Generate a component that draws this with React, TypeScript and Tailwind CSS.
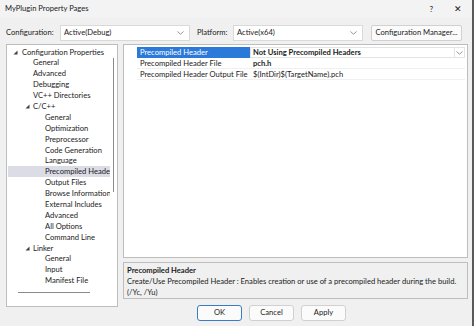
import React from "react";

const Chevron = ({ className = "" }: { className?: string }) => (
  <svg width="7" height="4" viewBox="0 0 7 4" className={className}>
    <path d="M0.5 0.5 L3.5 3.2 L6.5 0.5" fill="none" stroke="#7a7a7a" strokeWidth="0.8" />
  </svg>
);

const Tri = () => (
  <svg width="5" height="5" viewBox="0 0 5 5">
    <path d="M4.5 0.5 L4.5 4.5 L0.5 4.5 Z" fill="#404040" />
  </svg>
);

type Item = { label: string; level: number; expander?: boolean; selected?: boolean };

const items: Item[] = [
  { label: "Configuration Properties", level: 0, expander: true },
  { label: "General", level: 1 },
  { label: "Advanced", level: 1 },
  { label: "Debugging", level: 1 },
  { label: "VC++ Directories", level: 1 },
  { label: "C/C++", level: 1, expander: true },
  { label: "General", level: 2 },
  { label: "Optimization", level: 2 },
  { label: "Preprocessor", level: 2 },
  { label: "Code Generation", level: 2 },
  { label: "Language", level: 2 },
  { label: "Precompiled Heade", level: 2, selected: true },
  { label: "Output Files", level: 2 },
  { label: "Browse Information", level: 2 },
  { label: "External Includes", level: 2 },
  { label: "Advanced", level: 2 },
  { label: "All Options", level: 2 },
  { label: "Command Line", level: 2 },
  { label: "Linker", level: 1, expander: true },
  { label: "General", level: 2 },
  { label: "Input", level: 2 },
  { label: "Manifest File", level: 2 },
];

const padFor = (l: number) => (l === 0 ? "pl-[14px]" : l === 1 ? "pl-[25px]" : "pl-[37px]");
const triPad = (l: number) => (l === 0 ? "left-[5px]" : "left-[17px]");

export default function App() {
  return (
    <div
      className="w-[474px] h-[326px] bg-[#f0f0f0] text-[#1b1b1b] text-[7.6px] whitespace-nowrap overflow-hidden border-r-2 border-[#5a5a5a] flex flex-col"
      style={{ fontFamily: 'Lato, "Noto Sans", sans-serif' }}
    >
      {/* Title bar */}
      <div className="h-[18px] flex items-center justify-between pl-[5px] pr-[10px] bg-[#f3f3f3]">
        <span>MyPlugin Property Pages</span>
        <div className="flex items-center gap-[21px] text-[8px]">
          <span>?</span>
          <span className="text-[9px]">✕</span>
        </div>
      </div>

      {/* Configuration row */}
      <div className="h-[16px] mt-[7px] flex items-center pl-[6px]">
        <span className="w-[54px]">Configuration:</span>
        <div className="w-[130px] h-[16px] bg-white border border-[#d9d9d9] flex items-center justify-between pl-[3px] pr-[5px]">
          <span>Active(Debug)</span>
          <Chevron />
        </div>
        <span className="ml-[7px] w-[36px]">Platform:</span>
        <div className="w-[130px] h-[16px] bg-white border border-[#d9d9d9] flex items-center justify-between pl-[3px] pr-[5px]">
          <span>Active(x64)</span>
          <Chevron />
        </div>
        <div className="ml-[8px] w-[91px] h-[16px] bg-[#fbfbfb] border border-[#d0d0d0] rounded-[2px] flex items-center justify-center">
          Configuration Manager...
        </div>
      </div>

      {/* Main */}
      <div className="flex mt-[3px] pl-[6px] gap-[5px]">
        {/* Tree */}
        <div className="relative w-[112px] h-[263px] bg-white border border-[#bdbdbd] pl-[1px] pt-[1.5px]">
          {items.map((it, i) => (
            <div
              key={i}
              className={`relative h-[10.9px] leading-[10.9px] w-[102px] overflow-hidden ${padFor(it.level)} ${
                it.selected ? "bg-[#dcdce6]" : ""
              }`}
            >
              {it.expander && (
                <span className={`absolute top-[3px] ${triPad(it.level)} flex`}>
                  <Tri />
                </span>
              )}
              {it.label}
            </div>
          ))}
          {/* vertical scrollbar thumb */}
          <div className="absolute left-[106px] top-[13px] w-[1px] h-[134px] bg-[#8a8a8a]" />
          {/* horizontal scrollbar thumb */}
          <div className="absolute left-[11px] top-[247px] w-[72px] h-[1px] bg-[#8a8a8a]" />
        </div>

        {/* Right column */}
        <div className="w-[345px] flex flex-col">
          <div className="h-[214px] bg-white border border-[#bdbdbd] pt-[2px] pl-[13px] pr-[2px]">
            <div className="flex h-[11px] leading-[11px]">
              <div className="w-[113px] bg-[#2b79d8] text-white pl-[3px]">Precompiled Header</div>
              <div className="flex-1 flex items-center justify-between border border-[#e3e3e3] pl-[2px] font-bold">
                <span className="leading-[9px]">Not Using Precompiled Headers</span>
                <div className="w-[10px] h-[9px] border-l border-[#e3e3e3] flex items-center justify-center">
                  <Chevron />
                </div>
              </div>
            </div>
            <div className="flex h-[11px] leading-[11px] border-b border-[#f0f0f0]">
              <div className="w-[113px] pl-[3px]">Precompiled Header File</div>
              <div className="flex-1 pl-[3px] font-bold">pch.h</div>
            </div>
            <div className="flex h-[11px] leading-[11px] border-b border-[#f0f0f0]">
              <div className="w-[113px] pl-[3px]">Precompiled Header Output File</div>
              <div className="flex-1 pl-[3px]">$(IntDir)$(TargetName).pch</div>
            </div>
          </div>

          <div className="mt-[4px] h-[37px] border border-[#bdbdbd] bg-[#f0f0f0] pl-[3px] pt-[2px] leading-[10.8px]">
            <div className="font-bold">Precompiled Header</div>
            <div>Create/Use Precompiled Header : Enables creation or use of a precompiled header during the build.</div>
            <div>(/Yc, /Yu)</div>
          </div>

          <div className="mt-[6px] flex pl-[74px] gap-[7px]">
            <div className="w-[45px] h-[16px] bg-[#fbfbfb] border border-[#3a7bc8] rounded-[3px] flex items-center justify-center">
              OK
            </div>
            <div className="w-[45px] h-[16px] bg-[#fbfbfb] border border-[#d0d0d0] rounded-[3px] flex items-center justify-center">
              Cancel
            </div>
            <div className="w-[45px] h-[16px] bg-[#fbfbfb] border border-[#d0d0d0] rounded-[3px] flex items-center justify-center">
              Apply
            </div>
          </div>
        </div>
      </div>
    </div>
  );
}
